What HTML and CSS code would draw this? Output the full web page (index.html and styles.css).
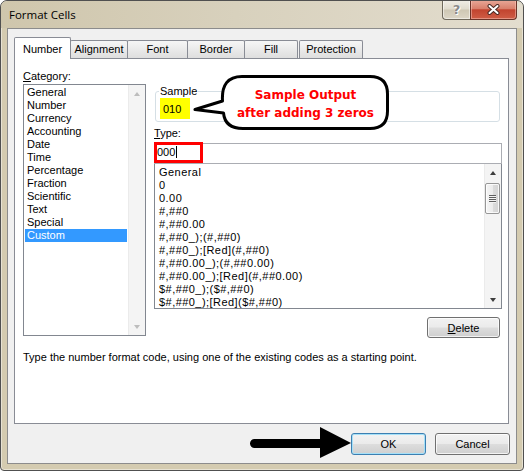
FILE: index.html
```html
<!DOCTYPE html>
<html>
<head>
<meta charset="utf-8">
<title>Format Cells</title>
<link rel="stylesheet" href="styles.css">
</head>
<body>
<div class="window">
  <div class="titlebar">
    <span class="title">Format Cells</span>
    <div class="caption">
      <div class="cbtn help"><span>?</span></div>
      <div class="cbtn close">
        <svg width="13" height="11" viewBox="0 0 13 11">
          <path d="M2.5 2 L10.5 9 M10.5 2 L2.5 9" stroke="#4a2a24" stroke-width="4" stroke-linecap="round"/>
          <path d="M2.5 2 L10.5 9 M10.5 2 L2.5 9" stroke="#ffffff" stroke-width="2" stroke-linecap="round"/>
        </svg>
      </div>
    </div>
  </div>
  <div class="client">
    <div class="tabs">
      <div class="tab active t-number">Number</div>
      <div class="tab t-align">Alignment</div>
      <div class="tab t-font">Font</div>
      <div class="tab t-border">Border</div>
      <div class="tab t-fill">Fill</div>
      <div class="tab t-prot">Protection</div>
    </div>
    <div class="panel">
      <div class="cols">
        <div class="col-left">
          <div class="label"><u>C</u>ategory:</div>
          <div class="listbox cat">
            <ul class="items">
              <li>General</li>
              <li>Number</li>
              <li>Currency</li>
              <li>Accounting</li>
              <li>Date</li>
              <li>Time</li>
              <li>Percentage</li>
              <li>Fraction</li>
              <li>Scientific</li>
              <li>Text</li>
              <li>Special</li>
              <li class="sel">Custom</li>
            </ul>
            <div class="vscroll">
              <div class="sbtn"><span class="arr up dis"></span></div>
              <div class="track"></div>
              <div class="sbtn"><span class="arr down dis"></span></div>
            </div>
          </div>
        </div>
        <div class="col-right">
          <fieldset class="sample">
            <legend>Sample</legend>
            <span class="samp">010</span>
          </fieldset>
          <div class="label type-label"><u>T</u>ype:</div>
          <div class="typein">000<span class="caret"></span><span class="redbox"></span></div>
          <div class="listbox fmt">
            <ul class="items">
              <li>General</li>
              <li>0</li>
              <li>0.00</li>
              <li>#,##0</li>
              <li>#,##0.00</li>
              <li>#,##0_);(#,##0)</li>
              <li>#,##0_);[Red](#,##0)</li>
              <li>#,##0.00_);(#,##0.00)</li>
              <li>#,##0.00_);[Red](#,##0.00)</li>
              <li>$#,##0_);($#,##0)</li>
              <li>$#,##0_);[Red]($#,##0)</li>
            </ul>
            <div class="vscroll">
              <div class="sbtn"><span class="arr up"></span></div>
              <div class="track"><div class="thumb"><span class="grip"></span></div></div>
              <div class="sbtn"><span class="arr down"></span></div>
            </div>
          </div>
          <button class="btn delete"><u>D</u>elete</button>
        </div>
      </div>
      <p class="desc">Type the number format code, using one of the existing codes as a starting point.</p>
    </div>
    <div class="footer">
      <svg class="arrow" width="103" height="31" viewBox="0 0 103 31">
        <path d="M6.5 12 H72 V0 L103 16 L72 31 V21 H6.5 A4.5 4.5 0 0 1 6.5 12 Z" fill="#000"/>
      </svg>
      <button class="btn ok">OK</button>
      <button class="btn cancel">Cancel</button>
    </div>
  </div>
  <svg class="bubble" width="205" height="62" viewBox="0 0 205 62">
    <path d="M52 4.5 H180 Q197.5 4.5 197.5 22 V39 Q197.5 56.5 180 56.5 H53 Q35 56.5 33.5 41 L5 37.5 L32.5 29 Q31 4.5 52 4.5 Z" fill="#fff" stroke="#000" stroke-width="3" stroke-linejoin="round"/>
  </svg>
  <div class="bubble-text">Sample Output<br>after adding 3 zeros</div>
</div>
</body>
</html>
```

FILE: styles.css
```css
* { box-sizing: border-box; }
html, body { margin: 0; padding: 0; }
body {
  width: 524px;
  height: 471px;
  overflow: hidden;
  background: #fff;
  font-family: "Liberation Sans", Arial, sans-serif;
  font-size: 11px;
  color: #000;
}

.window {
  position: relative;
  width: 524px;
  height: 471px;
  border: 1px solid #505050;
  border-radius: 7px 7px 4px 4px;
  background: #d4cbb0;
  box-shadow: inset 0 0 0 1px rgba(255,255,255,0.45);
  display: flex;
  flex-direction: column;
  overflow: hidden;
}

/* ---------- title bar ---------- */
.titlebar {
  height: 27px;
  flex: none;
  display: flex;
  align-items: flex-start;
  padding-left: 8px;
  background: linear-gradient(90deg, #cfc6ac 0%, #d8d1bd 45%, #e3ddce 100%);
  border-radius: 6px 6px 0 0;
}
.title {
  margin-top: 6px;
  line-height: 16px;
  font-family: "Open Sans", "Liberation Sans", sans-serif;
  font-size: 11.5px;
  color: #000;
}
.caption {
  margin-left: auto;
  margin-top: -1px;
  margin-right: 6px;
  display: flex;
}
.cbtn {
  height: 20px;
  display: flex;
  align-items: center;
  justify-content: center;
}
.help {
  width: 28px;
  border: 1px solid #6f695c;
  border-top: none;
  border-right: none;
  border-radius: 0 0 0 4px;
  background: linear-gradient(#f1eee7 0%, #e0dbce 48%, #cec7b4 52%, #dcd6c6 100%);
  box-shadow: inset 0 0 0 1px rgba(255,255,255,0.5);
}
.help span {
  font-family: "DejaVu Sans", sans-serif;
  font-weight: bold;
  font-size: 13px;
  line-height: 13px;
  color: #8a8a8a;
  text-shadow: 0 0 1px #fff, 1px 1px 0 #fff;
}
.close {
  width: 47px;
  border: 1px solid #6b3328;
  border-top: none;
  border-radius: 0 0 4px 0;
  background: linear-gradient(#e9a999 0%, #d9806c 45%, #c2442f 52%, #cf5d46 100%);
  box-shadow: inset 0 0 0 1px rgba(255,210,200,0.45);
}

/* ---------- client ---------- */
.client {
  flex: none;
  height: 436px;
  margin: 0 6px 6px 6px;
  border: 1px solid #8c8c8c;
  background: #f0f0f0;
  padding: 8px 0 0 6px;
  display: flex;
  flex-direction: column;
}

.tabs {
  display: flex;
  align-items: flex-end;
  height: 22px;
  margin-bottom: -1px;
  position: relative;
  z-index: 1;
}
.tab {
  height: 18px;
  margin-bottom: 1px;
  margin-left: -1px;
  border: 1px solid #898c95;
  border-bottom: none;
  background: linear-gradient(#f6f6f6, #dedede);
  text-align: center;
  line-height: 16px;
  border-radius: 2px 2px 0 0;
}
.tab.active {
  height: 22px;
  margin-bottom: 0;
  margin-left: 0;
  background: #fff;
  padding-top: 3px;
  position: relative;
  z-index: 2;
}
.t-number { width: 57px; }
.t-align { width: 58px; }
.t-font { width: 61px; }
.t-border { width: 58px; }
.t-fill { width: 54px; }
.t-prot { width: 64px; margin-left: 1px; }

.panel {
  width: 495px;
  height: 366px;
  flex: none;
  border: 1px solid #898c95;
  background: #fff;
  padding: 11px 0 0 8px;
}

.cols {
  display: flex;
  gap: 8px;
}
.col-left { width: 123px; }
.col-right {
  width: 348px;
  padding-top: 15px;
  display: flex;
  flex-direction: column;
}

.label {
  line-height: 13px;
  margin-bottom: 1px;
}

.listbox {
  display: flex;
  border: 1px solid #828790;
  background: #fff;
}
.listbox.cat { height: 252px; }
.listbox.fmt { height: 146px; margin-top: -1px; }

.items {
  list-style: none;
  margin: 0;
  padding: 1px 0 0 0;
  flex: 1;
}
.items li {
  line-height: 13px;
  height: 13px;
  margin: 0 1px;
  padding-left: 2px;
  white-space: nowrap;
}
.items li.sel {
  background: #3399ff;
  color: #fff;
}
.fmt .items { padding: 2px 0 0 1px; }
.fmt .items li { letter-spacing: 0.45px; }

.vscroll {
  width: 17px;
  flex: none;
  display: flex;
  flex-direction: column;
  background: #f4f4f4;
  border-left: 1px solid #ebebeb;
}
.sbtn {
  height: 17px;
  flex: none;
  display: flex;
  align-items: center;
  justify-content: center;
}
.track {
  flex: 1;
  padding-top: 2px;
}
.arr {
  width: 0;
  height: 0;
  border-left: 3.5px solid transparent;
  border-right: 3.5px solid transparent;
}
.arr.up { border-bottom: 4px solid #3d3d3d; }
.arr.down { border-top: 4px solid #3d3d3d; }
.arr.up.dis { border-bottom-color: #bdbdbd; }
.arr.down.dis { border-top-color: #bdbdbd; }

.thumb {
  height: 31px;
  margin: 0 1px 0 0;
  border: 1px solid #979797;
  border-radius: 2px;
  background: linear-gradient(90deg, #f5f5f5 0%, #ececec 50%, #dcdcdc 51%, #d4d4d4 100%);
  box-shadow: inset 0 0 0 1px rgba(255,255,255,0.8);
  display: flex;
  align-items: center;
  justify-content: center;
}
.grip {
  width: 7px;
  height: 8px;
  background: repeating-linear-gradient(#5f5f5f 0 1px, #f4f4f4 1px 2px);
}

/* sample group */
.sample {
  margin: 0 2px 0 1px;
  padding: 0 4px 2px 4px;
  border: 1px solid #d5dfe5;
  border-radius: 3px;
  min-width: 0;
}
.sample legend {
  padding: 0 1px;
  margin-left: -1px;
  line-height: 13px;
}
.samp {
  display: block;
  width: 30px;
  height: 21px;
  background: #ffff00;
  padding: 2px 0 0 3px;
  line-height: 19px;
}

.type-label {
  margin-top: 5px;
  margin-bottom: 3px;
}

.typein {
  position: relative;
  height: 21px;
  border: 1px solid #abadb3;
  padding-left: 2px;
  line-height: 17px;
  background: #fff;
}
.caret {
  display: inline-block;
  width: 1px;
  height: 12px;
  background: #000;
  margin-left: 1px;
  vertical-align: -2px;
}
.redbox {
  position: absolute;
  left: -1px;
  top: -2px;
  width: 49px;
  height: 21px;
  border: 3px solid #ff0000;
}

.btn {
  font-family: inherit;
  font-size: 11px;
  color: #000;
  border: 1px solid #707070;
  border-radius: 3px;
  background: linear-gradient(#f2f2f2 0%, #ebebeb 48%, #dddddd 52%, #cfcfcf 100%);
  box-shadow: inset 0 0 0 1px rgba(255,255,255,0.75);
  padding: 0;
  text-align: center;
}
.delete {
  align-self: flex-end;
  width: 73px;
  height: 21px;
  margin-top: 8px;
  margin-right: 2px;
}

.desc {
  margin: 13px 0 0 0;
  line-height: 13px;
}

/* footer */
.footer {
  flex: 1;
  display: flex;
  justify-content: flex-end;
  align-items: flex-start;
  padding: 9px 6px 0 0;
}
.arrow {
  margin-top: -6px;
  flex: none;
}
.ok, .cancel {
  width: 75px;
  height: 22px;
  flex: none;
}
.ok {
  border-color: #3c7fb1;
  box-shadow: inset 0 0 0 1px #a5e0f8;
}
.cancel { margin-left: 9px; }

/* callout annotation */
.bubble {
  position: absolute;
  left: 189px;
  top: 71px;
}
.bubble-text {
  position: absolute;
  left: 221px;
  top: 85px;
  width: 167px;
  text-align: center;
  font-family: "DejaVu Sans", sans-serif;
  font-weight: bold;
  font-size: 12px;
  line-height: 18px;
  color: #ff0000;
}
```
